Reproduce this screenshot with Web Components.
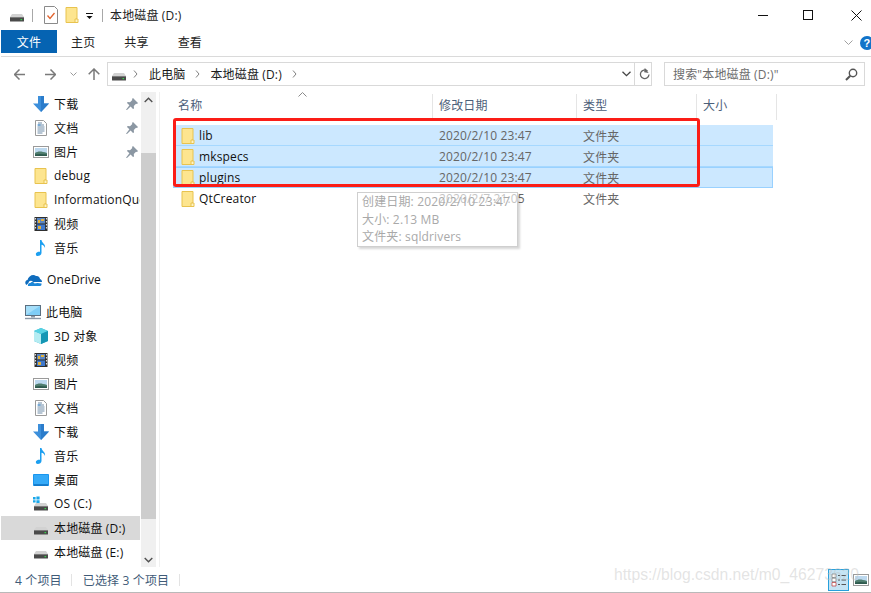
<!DOCTYPE html>
<html lang="zh">
<head>
<meta charset="utf-8">
<title>本地磁盘 (D:)</title>
<style>
  html, body { margin: 0; padding: 0; background: #fff; overflow: hidden; }
  body { font: 12px "Open Sans", "Noto Sans CJK SC", sans-serif; color: #000; letter-spacing: .15px; }
</style>
</head>
<body>
<file-explorer></file-explorer>

<script>
const ICONS = {
  drive: `<svg viewBox="0 0 16 16" width="16" height="16"><path d="M3 7h10l2 3H1z" fill="#d2d2d2"/><rect x="1" y="10" width="14" height="4.500" rx=".6" fill="#4a4a4a"/><rect x="1" y="10" width="14" height="1" fill="#7b7b7b"/><rect x="11.500" y="12" width="1.600" height="1.200" fill="#37d24a"/></svg>`,
  os: `<svg viewBox="0 0 16 16" width="16" height="16"><path d="M3 7h10l2 3H1z" fill="#d2d2d2"/><rect x="1" y="10" width="14" height="4.500" rx=".6" fill="#4a4a4a"/><rect x="1" y="10" width="14" height="1" fill="#7b7b7b"/><rect x="11.500" y="12" width="1.600" height="1.200" fill="#37d24a"/><path d="M0 1h2.600v2.400H0zM3.400 .6H6.600v2.800H3.400zM0 4.200h2.600v2.400H0zM3.400 4.200h3.200V7H3.400z" fill="#19a7ea"/></svg>`,
  folder: `<svg viewBox="0 0 16 16" width="16" height="16"><path d="M2 .5h11v11h-.5v4H2z" fill="#fde58f" stroke="#e8c34f"/><path d="M11 15.500V12h3v3.500z" fill="#fff3c4" stroke="#e8c34f"/></svg>`,
  check: `<svg viewBox="0 0 14 18" width="14" height="18"><path d="M.5.500h10l3 3v14H.5z" fill="#fff" stroke="#8a8a8a"/><path d="M3.500 9.500l2.500 3 4.500-5.500" fill="none" stroke="#e2622c" stroke-width="1.300"/></svg>`,
  down: `<svg viewBox="0 0 16 16" width="16" height="16"><path d="M5 0h6v7.500h5L8 16 0 7.500h5z" fill="#3c8fdb"/><path d="M8 0h3v7.500h5L8 16z" fill="#2b7ccb"/></svg>`,
  doc: `<svg viewBox="0 0 16 16" width="16" height="16"><path d="M2.500 .5h8l3 3v12h-11z" fill="#fff" stroke="#9a9a9a"/><path d="M5 3h4M5 5h6M4.500 7h7M4.500 9h7M4.500 11h7M4.500 13h5" stroke="#6f8ca8"/><path d="M4.500 5h3" stroke="#3a8fd6"/></svg>`,
  pic: `<svg viewBox="0 0 16 16" width="16" height="16"><rect x=".5" y="2.500" width="15" height="11" fill="#fff" stroke="#9a9a9a"/><rect x="2" y="4" width="12" height="8" fill="#bcd8ee"/><path d="M2 9c3-2 6-2 12 0v3H2z" fill="#4f7d6e"/><path d="M2 10.500c4-1 8-.5 12 0V12H2z" fill="#2e5a4e"/></svg>`,
  video: `<svg viewBox="0 0 16 16" width="16" height="16"><rect x="1.500" y="1" width="13" height="14" fill="#2f2f2f"/><path d="M2.500 2v1.500M2.500 5v1.500M2.500 8v1.500M2.500 11v1.500M13.500 2v1.500M13.500 5v1.500M13.500 8v1.500M13.500 11v1.500" stroke="#ddd" stroke-width="1.200"/><rect x="4" y="2" width="8" height="5.500" fill="#5a86c4"/><rect x="4" y="8.500" width="8" height="5.500" fill="#3f78cc"/><path d="M5 4h2v3H5zM8 3h3v2H8zM5 10h3v3H5z" fill="#e2b13c"/></svg>`,
  music: `<svg viewBox="0 0 16 16" width="16" height="16"><path d="M7 0h1.500c.2 3 4.500 4 3.500 8-.5-2-2-3-3.500-3.300V13c0 2-2 3-3.700 3C3 16 2.500 14.500 3 13.300 3.700 12 5.500 11.300 7 11.800z" fill="#1c9ff0"/></svg>`,
  cloud: `<svg viewBox="0 0 17 12" width="17" height="12"><path d="M1.500 11C-.5 9.500 0 6.500 2.500 6 3.500 2 8-.5 11 2c2-.5 4 1 4 3 1.500.5 2 1.500 2 3H8C6.500 6 4 6.500 3.500 9z" fill="#0f6cbd"/><path d="M3 12c-.5-2 1-3.500 2.500-3 .5-1.500 3.500-1.500 4 .5 2-1 5-.5 7 0 .3 1-.3 2.500-1.500 2.500z" fill="#1b87d8"/></svg>`,
  pc: `<svg viewBox="0 0 16 16" width="16" height="16"><rect x=".5" y="1.500" width="15" height="10" fill="#7fcdf6" stroke="#5c6f80"/><path d="M1 11V2h14z" fill="#a5def9"/><path d="M6 12h4v1.500H6z" fill="#8a98a6"/><path d="M0 14.500h16" stroke="#8a98a6" stroke-width="1.400"/></svg>`,
  cube: `<svg viewBox="0 0 16 16" width="16" height="16"><path d="M8 0l7 3v10l-7 3-7-3V3z" fill="#2eb6cf"/><path d="M1 3l7 3v10l-7-3z" fill="#b5ecf2"/><path d="M8 0l7 3-7 3-7-3z" fill="#58d2e3"/><path d="M8 6l7-3v10l-7 3z" fill="#1596b4"/></svg>`,
  desktop: `<svg viewBox="0 0 16 16" width="16" height="16"><rect y="2" width="16" height="12" rx=".8" fill="#1a96ee"/><rect x="1" y="3" width="14" height="9.500" fill="#35aaf8"/><path d="M1 13h14" stroke="#0b5fa8"/></svg>`,
  pin: `<svg viewBox="0 0 12 12" width="12" height="12"><path d="M7 0l5 5-1 1-1-.3L7.800 8 8 10.500 7 11 4.600 8.500 1 12l-1-.2L3.400 7.300 1 5l.6-1 2.400.2L6.300 2 6 1z" fill="#8b97a3"/></svg>`
};

// one glyph from the table above, picked with the name attribute
class AppIcon extends HTMLElement {
  connectedCallback() {
    const root = this.shadowRoot || this.attachShadow({ mode: 'open' });
    root.innerHTML = `<style>:host{display:inline-flex;align-items:center;justify-content:center;flex:none}svg{display:block}</style>${ICONS[this.getAttribute('name')] || ''}`;
  }
}
customElements.define('app-icon', AppIcon);

class TitleBar extends HTMLElement {
  constructor() {
    super();
    this.attachShadow({ mode: 'open' }).innerHTML = `
      <style>
        :host { display: flex; align-items: center; height: 30px; flex: none; }
        .sep { width: 1px; height: 13px; background: #a8a8a8; flex: none; }
        .title { margin-left: 7px; color: #222; flex: 1; padding-bottom: 1px; }
        .ctl { display: block; flex: none; }
      </style>
      <app-icon name="drive" style="margin-left:9px"></app-icon>
      <span class="sep" style="margin-left:7px"></span>
      <app-icon name="check" style="margin-left:11px"></app-icon>
      <app-icon name="folder" style="margin-left:6px"></app-icon>
      <svg class="ctl" style="margin-left:5px" width="10" height="10" viewBox="0 0 10 10"><path d="M1 3.500h7" stroke="#111"/><path d="M1.500 6h6L4.500 9z" fill="#111"/></svg>
      <span class="sep" style="margin-left:7px"></span>
      <span class="title">本地磁盘 (D:)</span>
      <svg class="ctl" width="11" height="11" viewBox="0 0 11 11"><path d="M0 5.500h10" stroke="#111"/></svg>
      <svg class="ctl" style="margin-left:34px" width="11" height="11" viewBox="0 0 11 11"><rect x=".5" y=".5" width="9" height="9" fill="none" stroke="#111"/></svg>
      <svg class="ctl" style="margin-left:37px;margin-right:9px" width="11" height="11" viewBox="0 0 11 11"><path d="M.5.500l10 10M10.500.500l-10 10" stroke="#111"/></svg>
    `;
  }
}
customElements.define('title-bar', TitleBar);

class RibbonTabs extends HTMLElement {
  constructor() {
    super();
    this.attachShadow({ mode: 'open' }).innerHTML = `
      <style>
        :host { display: flex; height: 26px; margin-left: 1px; flex: none; border-bottom: 1px solid #dadada; box-sizing: content-box; }
        .file { width: 56px; height: 23px; background: #0563b2; color: #fff; display: flex; align-items: center; justify-content: center; }
        .tab { height: 23px; line-height: 25px; color: #222; margin-left: 29px; }
        .tab.first { margin-left: 14px; }
        .end { margin-left: auto; display: flex; align-items: center; height: 26px; }
        .help { width: 11px; height: 14px; overflow: hidden; margin-left: 7px; }
        .help i { display: block; width: 14px; height: 14px; border-radius: 50%; background: #1173c9; color: #fff; font: bold 11px/14px "Liberation Sans", sans-serif; text-align: center; font-style: normal; }
      </style>
      <span class="file">文件</span>
      <span class="tab first">主页</span>
      <span class="tab">共享</span>
      <span class="tab">查看</span>
      <span class="end">
        <svg width="9" height="6" viewBox="0 0 9 6"><path d="M.5.500l4 4 4-4" fill="none" stroke="#a0a0a0"/></svg>
        <span class="help"><i>?</i></span>
      </span>
    `;
  }
}
customElements.define('ribbon-tabs', RibbonTabs);

class AddressBar extends HTMLElement {
  constructor() {
    super();
    const crumb = `<svg width="5" height="8" viewBox="0 0 5 8"><path d="M1 .5l3 3.500-3 3.500" fill="none" stroke="#808080"/></svg>`;
    this.attachShadow({ mode: 'open' }).innerHTML = `
      <style>
        :host { display: flex; align-items: center; height: 24px; margin-top: 5px; flex: none; }
        svg { display: block; flex: none; }
        .box { height: 24px; box-sizing: border-box; border: 1px solid #d9d9d9; display: flex; align-items: center; flex: none; }
        .path { width: 545px; margin-left: 7px; color: #1a1a1a; }
        .search { width: 201px; margin-left: 12px; color: #6d6d6d; padding-left: 8px; }
        .search svg { margin-left: auto; margin-right: 6px; }
        .div { width: 1px; height: 22px; background: #d9d9d9; margin-left: 3px; }
      </style>
      <svg style="margin-left:14px" width="12" height="11" viewBox="0 0 12 11"><path d="M0 5.500h11M5.500 .5L.5 5.500l5 5" fill="none" stroke="#7a7a7a" stroke-width="1.500"/></svg>
      <svg style="margin-left:18px" width="12" height="11" viewBox="0 0 12 11"><path d="M12 5.500H1M6.500 .5l5 5-5 5" fill="none" stroke="#7a7a7a" stroke-width="1.500"/></svg>
      <svg style="margin-left:14px" width="7" height="5" viewBox="0 0 7 5"><path d="M.5.500l3 3 3-3" fill="none" stroke="#9a9a9a"/></svg>
      <svg style="margin-left:11px" width="12" height="12" viewBox="0 0 12 12"><path d="M6 12V1M.7 6.300L6 1l5.300 5.300" fill="none" stroke="#7a7a7a" stroke-width="1.500"/></svg>
      <div class="box path">
        <app-icon name="drive" style="margin-left:3px"></app-icon>
        <span style="margin-left:6px;display:flex">${crumb}</span>
        <span style="margin-left:11px">此电脑</span>
        <span style="margin-left:10px;display:flex">${crumb}</span>
        <span style="margin-left:10px">本地磁盘 (D:)</span>
        <span style="margin-left:10px;display:flex">${crumb}</span>
        <svg style="margin-left:auto" width="9" height="6" viewBox="0 0 9 6"><path d="M.5.700l4 4 4-4" fill="none" stroke="#444" stroke-width="1.300"/></svg>
        <span class="div"></span>
        <svg style="margin:0 1px 0 4px" width="11" height="12" viewBox="0 0 11 12"><path d="M8.500 3A4.300 4.300 0 1 0 10 6.500" fill="none" stroke="#666" stroke-width="1.300"/><path d="M5.500 0v4.500h4.500z" fill="#666" transform="rotate(8 7 2)"/></svg>
      </div>
      <div class="box search">
        搜索"本地磁盘 (D:)"
        <svg width="13" height="13" viewBox="0 0 13 13"><circle cx="8" cy="5" r="3.700" fill="none" stroke="#555" stroke-width="1.400"/><path d="M5.300 7.700L1 12" stroke="#555" stroke-width="2"/></svg>
      </div>
    `;
  }
}
customElements.define('address-bar', AddressBar);

class NavItem extends HTMLElement {
  constructor() {
    super();
    this.attachShadow({ mode: 'open' });
  }
  connectedCallback() {
    const level = this.getAttribute('level') || '1';
    const pin = this.hasAttribute('pin') ? `<app-icon class="pin" name="pin"></app-icon>` : '';
    this.shadowRoot.innerHTML = `
      <style>
        :host { display: flex; align-items: center; height: 24px; padding-left: ${level === '0' ? 24 : 32}px; color: #111; overflow: hidden; white-space: nowrap; position: relative; margin-left: 1px; width: 139px; box-sizing: border-box; }
        :host([selected]) { background: #d9d9d9; }
        .label { margin-left: 5px; padding-bottom: 1px; }
        .pin { position: absolute; left: 125px; top: 6px; }
      </style>
      <app-icon name="${this.getAttribute('icon')}"></app-icon>
      <span class="label"><slot></slot></span>
      ${pin}
    `;
  }
}
customElements.define('nav-item', NavItem);

class NavPane extends HTMLElement {
  constructor() {
    super();
    this.attachShadow({ mode: 'open' }).innerHTML = `
      <style>
        :host { display: flex; flex: none; width: 160px; border-right: 1px solid #f0f0f0; box-sizing: border-box; }
        .list { width: 141px; flex: none; overflow: hidden; }
        .bar { width: 15px; flex: none; display: flex; flex-direction: column; background: #f0f0f0; }
        .btn { height: 15px; display: flex; align-items: center; justify-content: center; flex: none; }
        .gap { height: 46px; }
        .thumb { height: 366px; background: #cdcdcd; }
        .rest { flex: 1; }
      </style>
      <div class="list"><slot></slot></div>
      <div class="bar">
        <div class="btn"><svg width="9" height="6" viewBox="0 0 9 6"><path d="M.7 5l3.800-3.800L8.300 5" fill="none" stroke="#505050" stroke-width="1.400"/></svg></div>
        <div class="gap"></div>
        <div class="thumb"></div>
        <div class="rest"></div>
        <div class="btn"><svg width="9" height="6" viewBox="0 0 9 6"><path d="M.7 1l3.800 3.800L8.300 1" fill="none" stroke="#505050" stroke-width="1.400"/></svg></div>
      </div>
    `;
  }
}
customElements.define('nav-pane', NavPane);

class FileRow extends HTMLElement {
  constructor() {
    super();
    this.attachShadow({ mode: 'open' });
  }
  connectedCallback() {
    this.shadowRoot.innerHTML = `
      <style>
        :host { display: grid; grid-template-columns: 266px 144px 1fr; align-items: center; height: 21px; box-sizing: border-box; width: 600px; white-space: nowrap; color: #666; }
        :host([selected]) { background: #cce8ff; box-shadow: inset 0 -1px 0 #a6d8ff; }
        :host([focused]) { box-shadow: inset 0 0 0 1px #99d1ff; }
        .name { display: flex; align-items: center; color: #111; padding-left: 7px; }
        .name span { margin-left: 3px; }
      </style>
      <div class="name"><app-icon name="folder"></app-icon><span><slot></slot></span></div>
      <div>${this.getAttribute('date')}</div>
      <div>文件夹</div>
    `;
  }
}
customElements.define('file-row', FileRow);

class FileList extends HTMLElement {
  constructor() {
    super();
    this.attachShadow({ mode: 'open' }).innerHTML = `
      <style>
        :host { display: block; flex: 1; position: relative; min-width: 0; }
        .head { display: flex; height: 26px; color: #4c607a; margin-top: 2px; position: relative; }
        .head div { box-sizing: border-box; border-right: 1px solid #e5e5e5; padding-left: 6px; line-height: 24px; flex: none; }
        .sort { position: absolute; left: 138px; top: -2px; }
        .rows { margin: 5px 0 0 13px; }
      </style>
      <div class="head">
        <div style="width:273px;padding-left:18px">名称</div>
        <div style="width:144px">修改日期</div>
        <div style="width:120px">类型</div>
        <div style="width:80px">大小</div>
        <svg class="sort" width="9" height="5" viewBox="0 0 9 5"><path d="M.5 4.500l4-4 4 4" fill="none" stroke="#8a8a8a"/></svg>
      </div>
      <div class="rows"><slot></slot></div>
    `;
  }
}
customElements.define('file-list', FileList);

// grey hover card, it lies over the rows
class HoverTip extends HTMLElement {
  constructor() {
    super();
    this.attachShadow({ mode: 'open' }).innerHTML = `
      <style>
        :host { position: absolute; left: 197px; top: 100px; width: 161px; height: 55px; box-sizing: border-box; border: 1px solid #cfcfcf; background: rgba(255,255,255,.62); box-shadow: 2px 2px 2px rgba(0,0,0,.16); color: #a9a9a9; padding: 0 4px; line-height: 17.500px; white-space: nowrap; }
      </style>
      <div>创建日期: 2020/2/10 23:47</div>
      <div>大小: 2.13 MB</div>
      <div>文件夹: sqldrivers</div>
    `;
  }
}
customElements.define('hover-tip', HoverTip);

class StatusBar extends HTMLElement {
  constructor() {
    super();
    this.attachShadow({ mode: 'open' }).innerHTML = `
      <style>
        :host { display: flex; align-items: center; height: 25px; flex: none; border-bottom: 1px solid #b9b9b9; box-sizing: content-box; color: #3f5b78; position: relative; }
        .sep { width: 1px; height: 12px; background: #e3e3e3; }
        .views { margin-left: auto; display: flex; align-items: center; height: 24px; margin-right: 2px; }
        .on { width: 21px; height: 22px; box-sizing: border-box; border: 1px solid #27a0dc; background: #c5e4f4; display: flex; align-items: center; justify-content: center; }
      </style>
      <span style="margin-left:15px">4 个项目</span>
      <span class="sep" style="margin-left:9px"></span>
      <span style="margin-left:11px">已选择 3 个项目</span>
      <span class="sep" style="margin-left:10px"></span>
      <span class="views">
        <span class="on"><svg width="16" height="14" viewBox="0 0 16 14"><path d="M1 1h4v3.500H1zM1 5.200h4v3.500H1z" fill="#fff" stroke="#777" stroke-width=".7"/><path d="M1 9.500h4V13H1z" fill="#fff" stroke="#b33" stroke-width=".7"/><path d="M7 2.500h2M10.500 2.500h4.500M7 7h2M10.500 7h4.500M7 11.500h2M10.500 11.500h4.500" stroke="#555"/></svg></span>
        <app-icon name="pic" style="margin-left:4px"></app-icon>
      </span>
    `;
  }
}
customElements.define('status-bar', StatusBar);

class FileExplorer extends HTMLElement {
  constructor() {
    super();
    const nav = [
      ['down', '下载', 1, 'pin'], ['doc', '文档', 1, 'pin'], ['pic', '图片', 1, 'pin'],
      ['folder', 'debug', 1], ['folder', 'InformationQuery', 1], ['video', '视频', 1], ['music', '音乐', 1],
      null,
      ['cloud', 'OneDrive', 0],
      null,
      ['pc', '此电脑', 0], ['cube', '3D 对象', 1], ['video', '视频', 1], ['pic', '图片', 1], ['doc', '文档', 1],
      ['down', '下载', 1], ['music', '音乐', 1], ['desktop', '桌面', 1], ['os', 'OS (C:)', 1],
      ['drive', '本地磁盘 (D:)', 1, 'selected'], ['drive', '本地磁盘 (E:)', 1]
    ].map(n => n
      ? `<nav-item icon="${n[0]}" level="${n[2]}" ${n[3] || ''}>${n[1]}</nav-item>`
      : `<div style="height:8px"></div>`).join('');
    this.attachShadow({ mode: 'open' }).innerHTML = `
      <style>
        :host { display: flex; flex-direction: column; width: 871px; height: 593px; position: relative; overflow: hidden; background: #fff; }
        .main { flex: 1; display: flex; margin-top: 6px; min-height: 0; }
        .mark { position: absolute; left: 614px; top: 566px; font: 15.700px "Liberation Sans", sans-serif; letter-spacing: 0; color: rgba(190,190,190,.42); white-space: nowrap; }
        .red { position: absolute; left: 173px; top: 118px; width: 527px; height: 69px; box-sizing: border-box; border: 3px solid #fb1d17; border-radius: 3px; }
      </style>
      <title-bar></title-bar>
      <ribbon-tabs></ribbon-tabs>
      <address-bar></address-bar>
      <div class="main">
        <nav-pane>${nav}</nav-pane>
        <file-list>
          <file-row selected date="2020/2/10 23:47">lib</file-row>
          <file-row selected date="2020/2/10 23:47">mkspecs</file-row>
          <file-row selected focused date="2020/2/10 23:47">plugins</file-row>
          <file-row date="2020/2/7 21:05">QtCreator</file-row>
          <hover-tip></hover-tip>
        </file-list>
      </div>
      <status-bar></status-bar>
      <div class="red"></div>
      <div class="mark">https://blog.csdn.net/m0_46273620</div>
    `;
  }
}
customElements.define('file-explorer', FileExplorer);
</script>
</body>
</html>
